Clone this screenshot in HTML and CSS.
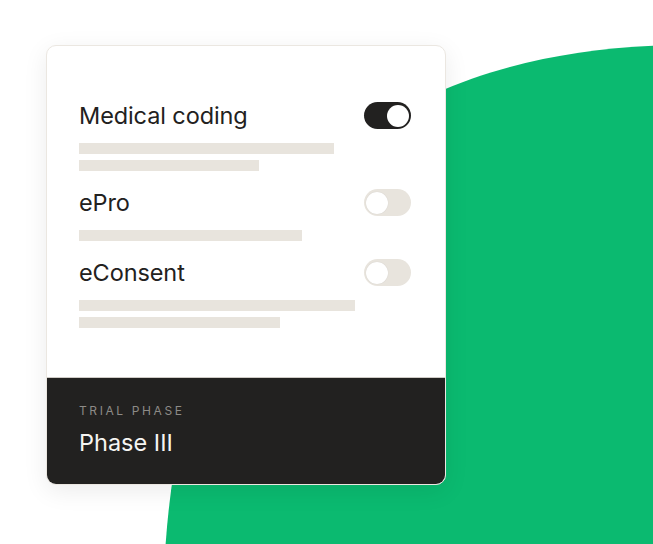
FILE: index.html
```html
<!DOCTYPE html>
<html>
<head>
<meta charset="utf-8">
<link rel="stylesheet" href="styles.css">
</head>
<body>
<div class="stage">
  <svg class="blob" width="653" height="544" viewBox="0 0 653 544" aria-hidden="true">
    <path d="M163 620 C163 180 410 45 690 45 L700 45 L700 620 Z" fill="#0bba70"/>
  </svg>
  <div class="card">
    <div class="card-body">
      <div class="item">
        <div class="row">
          <span class="label">Medical coding</span>
          <span class="toggle on"><span class="knob"></span></span>
        </div>
        <div class="bars">
          <div class="bar" style="width:255px"></div>
          <div class="bar" style="width:180px"></div>
        </div>
      </div>
      <div class="item">
        <div class="row">
          <span class="label">ePro</span>
          <span class="toggle"><span class="knob"></span></span>
        </div>
        <div class="bars">
          <div class="bar" style="width:223px"></div>
        </div>
      </div>
      <div class="item">
        <div class="row">
          <span class="label">eConsent</span>
          <span class="toggle"><span class="knob"></span></span>
        </div>
        <div class="bars">
          <div class="bar" style="width:276px"></div>
          <div class="bar" style="width:201px"></div>
        </div>
      </div>
    </div>
    <div class="card-foot">
      <div class="eyebrow">TRIAL PHASE</div>
      <div class="phase">Phase III</div>
    </div>
  </div>
</div>
</body>
</html>
```
FILE: styles.css
```css
html, body {
  margin: 0;
  padding: 0;
  background: #ffffff;
}
body {
  width: 653px;
  height: 544px;
  overflow: hidden;
  font-family: Inter, "Liberation Sans", sans-serif;
  color: #222120;
}
.stage {
  position: relative;
  width: 653px;
  height: 544px;
  padding: 45px 0 0 46px;
  box-sizing: border-box;
}
.blob {
  position: absolute;
  left: 0;
  top: 0;
}
.card {
  position: relative;
  width: 400px;
  box-sizing: border-box;
  border: 1px solid #ebe7e1;
  border-radius: 10px;
  overflow: hidden;
  background: #ffffff;
  box-shadow: 0 6px 24px rgba(0, 0, 0, 0.08);
}
.card-body {
  padding: 56px 34px 49px 32px;
  border-bottom: 1px solid #cfcbc6;
}
.item + .item {
  margin-top: 18px;
}
.row {
  display: flex;
  align-items: center;
  justify-content: space-between;
  height: 27px;
}
.label {
  font-size: 23.5px;
  line-height: 27px;
  letter-spacing: -0.1px;
}
.toggle {
  position: relative;
  width: 47px;
  height: 27px;
  border-radius: 14px;
  background: #e8e4dd;
  display: flex;
  align-items: center;
  padding: 0 2px;
  box-sizing: border-box;
}
.toggle .knob {
  width: 22px;
  height: 22px;
  border-radius: 50%;
  background: #ffffff;
  box-shadow: 0 0 1px rgba(0, 0, 0, 0.15);
}
.toggle.on {
  background: #222120;
  justify-content: flex-end;
}
.bars {
  display: flex;
  flex-direction: column;
  gap: 6px;
  margin-top: 14px;
}
.bar {
  height: 11px;
  background: #e8e4dd;
}
.card-foot {
  background: #222120;
  padding: 25px 32px 30px;
  height: 106px;
  box-sizing: border-box;
}
.eyebrow {
  font-size: 12px;
  line-height: 15px;
  letter-spacing: 2.6px;
  color: #8d8b87;
}
.phase {
  margin-top: 11px;
  font-size: 23.5px;
  line-height: 27px;
  color: #f6f5f2;
}
```
